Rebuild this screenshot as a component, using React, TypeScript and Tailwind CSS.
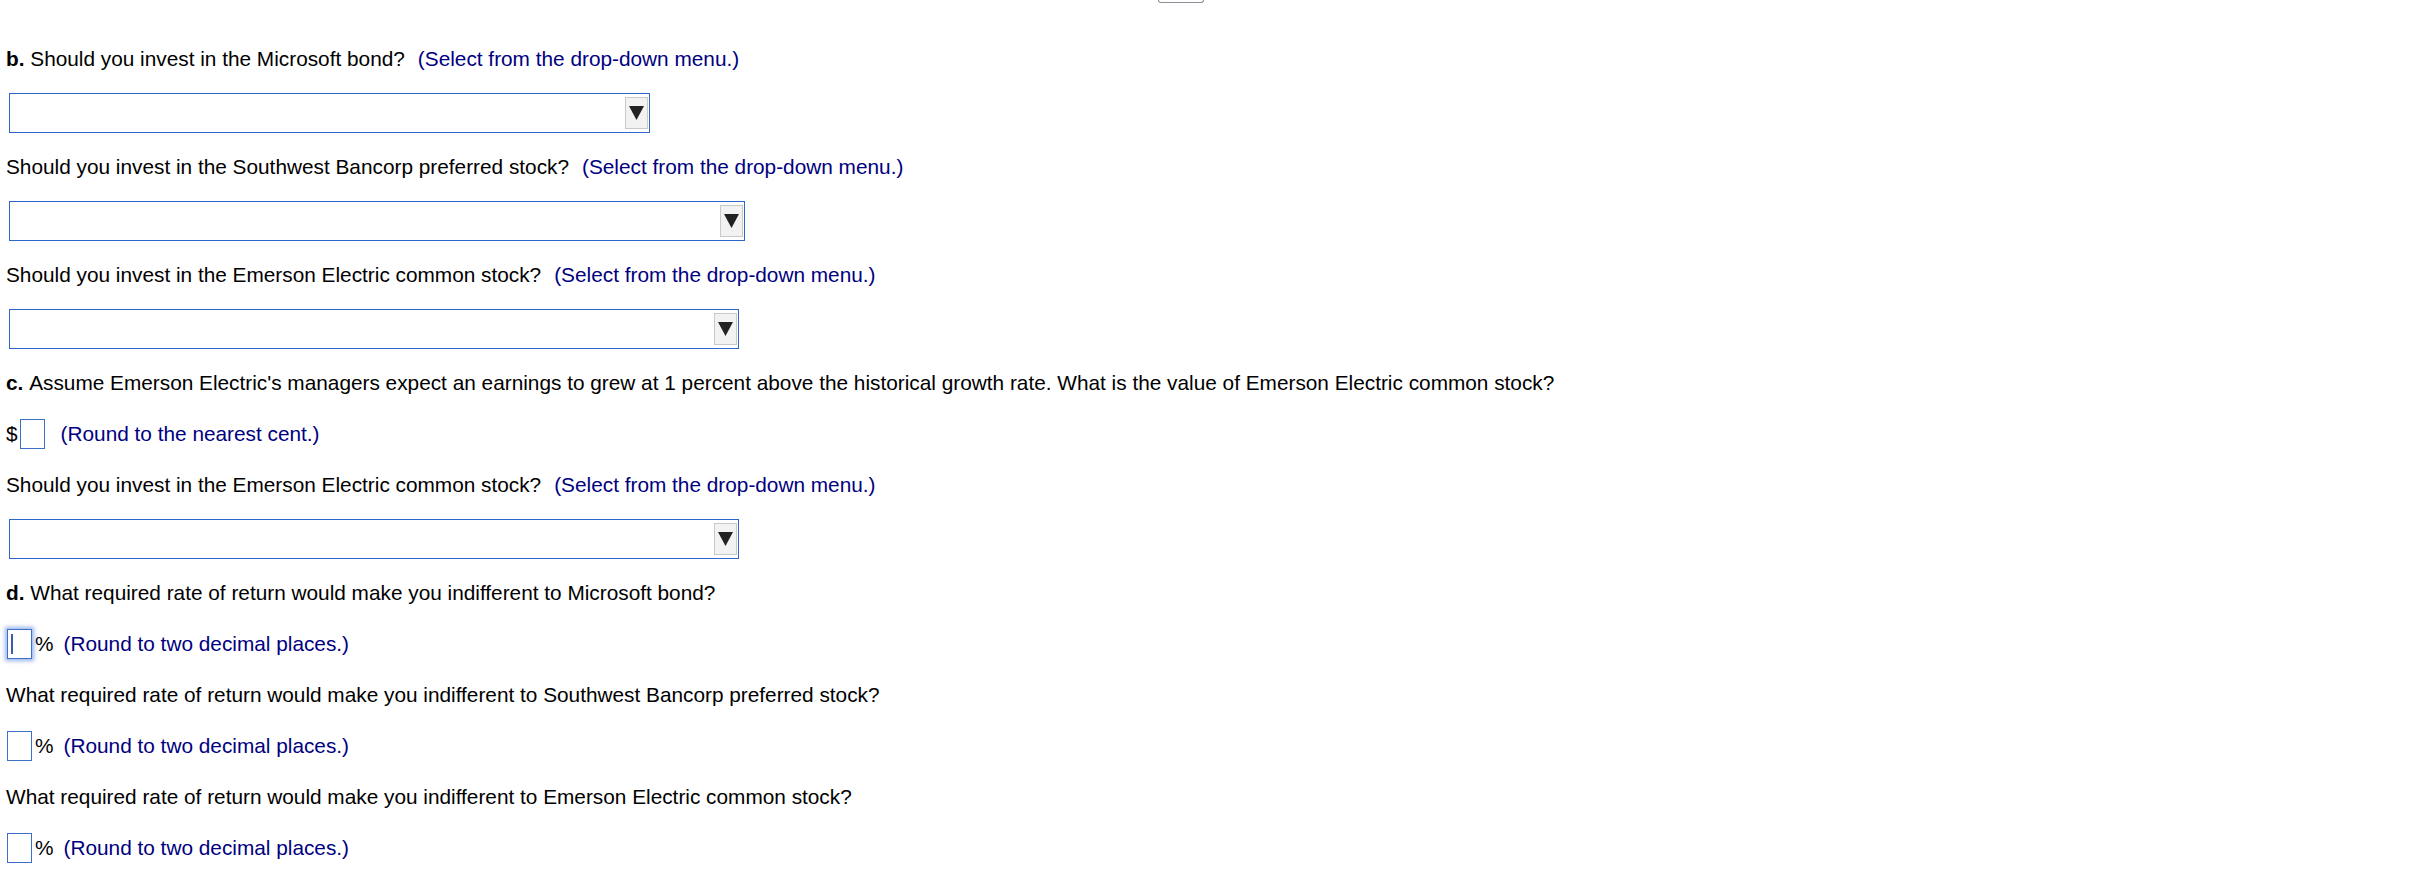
import React from 'react';

const hint = 'text-[#000080]';

function Dropdown({ width }: { width: string }) {
  return (
    <div className={`ml-[9px] flex h-[40px] items-center justify-end border-[1.5px] border-[#2f66cc] bg-white pr-[1px] ${width}`}>
      <div className="flex h-[32px] w-[23px] items-center justify-center border border-[#c9c9c9] bg-[#f2f2f2]">
        <svg width="15" height="16" viewBox="0 0 15 16">
          <polygon points="0,1 15,1 7.5,15" fill="#222" />
        </svg>
      </div>
    </div>
  );
}

function Box({ focused }: { focused?: boolean }) {
  return (
    <div
      className={`h-[30px] w-[25px] border-[1.5px] border-[#3b6fc8] bg-white ${
        focused ? 'relative shadow-[0_0_4px_2px_rgba(70,120,220,0.55)]' : ''
      }`}
    >
      {focused && <div className="absolute left-[3px] top-[4px] h-[20px] w-[1.5px] bg-[#3a5bb0]" />}
    </div>
  );
}

function Q({ label, children, note }: { label?: string; children: React.ReactNode; note?: string }) {
  return (
    <p className="h-[24px] whitespace-nowrap pl-[6px] leading-[24px]">
      {label && <b>{label} </b>}
      {children}
      {note && <span className={`ml-[13px] ${hint}`}>{note}</span>}
    </p>
  );
}

function PercentRow({ focused }: { focused?: boolean }) {
  return (
    <div className="flex h-[34px] items-center pl-[7px]">
      <Box focused={focused} />
      <span className="ml-[3px]">%</span>
      <span className={`ml-[10px] ${hint}`}>(Round to two decimal places.)</span>
    </div>
  );
}

export default function App() {
  return (
    <div className="min-h-[888px] bg-white text-[20.8px] text-black" style={{ fontFamily: '"Liberation Sans", Arial, sans-serif' }}>
      <div className="ml-[1158px] h-[3px] w-[46px] rounded-b-[4px] border-x border-b border-[#8a8f98]" />
      <div className="flex flex-col gap-[22px] pt-[44px]">
        <Q label="b." note="(Select from the drop-down menu.)">Should you invest in the Microsoft bond?</Q>
        <Dropdown width="w-[641px]" />
        <Q note="(Select from the drop-down menu.)">Should you invest in the Southwest Bancorp preferred stock?</Q>
        <Dropdown width="w-[736px]" />
        <Q note="(Select from the drop-down menu.)">Should you invest in the Emerson Electric common stock?</Q>
        <Dropdown width="w-[730px]" />
        <Q label="c.">
          Assume Emerson Electric's managers expect an earnings to grew at 1 percent above the historical growth rate. What is the value of Emerson Electric common stock?
        </Q>
        <div className="flex h-[34px] items-center pl-[6px]">
          <span>$</span>
          <span className="ml-[2px]">
            <Box />
          </span>
          <span className={`ml-[16px] ${hint}`}>(Round to the nearest cent.)</span>
        </div>
        <Q note="(Select from the drop-down menu.)">Should you invest in the Emerson Electric common stock?</Q>
        <Dropdown width="w-[730px]" />
        <Q label="d.">What required rate of return would make you indifferent to Microsoft bond?</Q>
        <PercentRow focused />
        <Q>What required rate of return would make you indifferent to Southwest Bancorp preferred stock?</Q>
        <PercentRow />
        <Q>What required rate of return would make you indifferent to Emerson Electric common stock?</Q>
        <PercentRow />
      </div>
    </div>
  );
}
